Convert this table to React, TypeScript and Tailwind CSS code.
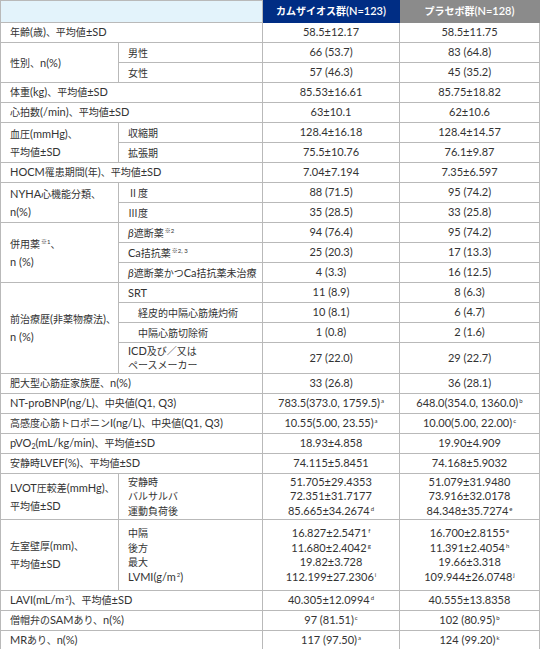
import React from 'react';

type Sub = { label: React.ReactNode; a: React.ReactNode; b: React.ReactNode; indent?: boolean; tall?: boolean };

const line = 'border border-[#b9b9b9]';
const thin = 'border-t-[#dcdcdc]';

// Japanese runs are set a size smaller than the Latin text, as in the source table
const CJK = /([\u2000-\u206f\u2150-\u218f\u3000-\u30ff\u3400-\u9fff\uff00-\uffef]+)/;

const T = ({ s }: { s: string }) => (
  <>
    {s.split(CJK).map((p, i) =>
      i % 2 ? (
        <span key={i} className="text-[10px]">
          {p}
        </span>
      ) : (
        p
      )
    )}
  </>
);

const tx = (n: React.ReactNode) => (typeof n === 'string' ? <T s={n} /> : n);

const Sup = ({ children }: { children: React.ReactNode }) => (
  <sup className="relative -top-[4px] ml-px text-[6px] leading-none">{children}</sup>
);

const Single = ({ label, a, b }: { label: React.ReactNode; a: React.ReactNode; b: React.ReactNode }) => (
  <tr className="h-[20px]">
    <td colSpan={2} className={`${line} pl-[9px]`}>{tx(label)}</td>
    <td className={`${line} text-center`}>{a}</td>
    <td className={`${line} text-center`}>{b}</td>
  </tr>
);

const Group = ({ label, rows }: { label: React.ReactNode; rows: Sub[] }) => (
  <>
    {rows.map((r, i) => (
      <tr key={i} className={r.tall ? 'h-[31px]' : 'h-[20px]'}>
        {i === 0 && (
          <td rowSpan={rows.length} className={`${line} pl-[9px] leading-[18px]`}>
            {tx(label)}
          </td>
        )}
        <td className={`${line} ${i > 0 ? thin : ''} ${r.indent ? 'pl-[19px]' : 'pl-[9px]'} leading-[13px]`}>{tx(r.label)}</td>
        <td className={`${line} ${i > 0 ? thin : ''} text-center`}>{r.a}</td>
        <td className={`${line} ${i > 0 ? thin : ''} text-center`}>{r.b}</td>
      </tr>
    ))}
  </>
);

const Multi = ({ label, subs, a, b, h }: { label: React.ReactNode; subs: React.ReactNode[]; a: React.ReactNode[]; b: React.ReactNode[]; h: string }) => (
  <tr className={h}>
    <td className={`${line} pl-[9px] leading-[17px]`}>{label}</td>
    <td className={`${line} pl-[9px] leading-[14.5px]`}>
      {subs.map((s, i) => (
        <div key={i}>{tx(s)}</div>
      ))}
    </td>
    <td className={`${line} text-center leading-[14.5px]`}>
      {a.map((s, i) => (
        <div key={i}>{s}</div>
      ))}
    </td>
    <td className={`${line} text-center leading-[14.5px]`}>
      {b.map((s, i) => (
        <div key={i}>{s}</div>
      ))}
    </td>
  </tr>
);

export default function App() {
  return (
    <div className="w-[540px] bg-white font-['Lato','Noto_Sans_CJK_JP',sans-serif] text-[11px] text-[#333]">
      <table className="w-[539px] table-fixed border-collapse">
        <colgroup>
          <col className="w-[118px]" />
          <col className="w-[144px]" />
          <col className="w-[137px]" />
          <col className="w-[140px]" />
        </colgroup>
        <tbody>
          <tr className="h-[22px]">
            <td colSpan={2} className={`${line} bg-[#e3f3fb]`}></td>
            <td className="border border-[#002d84] bg-[#002d84] text-center font-semibold text-white">
              <T s="カムザイオス群(N=123)" />
            </td>
            <td className="border border-[#8b8b8b] bg-[#8b8b8b] text-center font-semibold text-white">
              <T s="プラセボ群(N=128)" />
            </td>
          </tr>
          <Single label="年齢(歳)、平均値±SD" a="58.5±12.17" b="58.5±11.75" />
          <Group
            label="性別、n(%)"
            rows={[
              { label: '男性', a: '66 (53.7)', b: '83 (64.8)' },
              { label: '女性', a: '57 (46.3)', b: '45 (35.2)' },
            ]}
          />
          <Single label="体重(kg)、平均値±SD" a="85.53±16.61" b="85.75±18.82" />
          <Single label="心拍数(/min)、平均値±SD" a="63±10.1" b="62±10.6" />
          <Group
            label={<><T s="血圧(mmHg)、" /><br /><T s="平均値±SD" /></>}
            rows={[
              { label: '収縮期', a: '128.4±16.18', b: '128.4±14.57' },
              { label: '拡張期', a: '75.5±10.76', b: '76.1±9.87' },
            ]}
          />
          <Single label="HOCM罹患期間(年)、平均値±SD" a="7.04±7.194" b="7.35±6.597" />
          <Group
            label={<><T s="NYHA心機能分類、" /><br />n(%)</>}
            rows={[
              { label: 'Ⅱ度', a: '88 (71.5)', b: '95 (74.2)' },
              { label: 'Ⅲ度', a: '35 (28.5)', b: '33 (25.8)' },
            ]}
          />
          <Group
            label={<><T s="併用薬" /><Sup>※1</Sup><T s="、" /><br />n (%)</>}
            rows={[
              { label: <><i>β</i><T s="遮断薬" /><Sup>※2</Sup></>, a: '94 (76.4)', b: '95 (74.2)' },
              { label: <>Ca<T s="拮抗薬" /><Sup>※2, 3</Sup></>, a: '25 (20.3)', b: '17 (13.3)' },
              { label: <><i>β</i><T s="遮断薬かつCa拮抗薬未治療" /></>, a: '4 (3.3)', b: '16 (12.5)' },
            ]}
          />
          <Group
            label={<><T s="前治療歴(非薬物療法)、" /><br />n (%)</>}
            rows={[
              { label: 'SRT', a: '11 (8.9)', b: '8 (6.3)' },
              { label: '経皮的中隔心筋焼灼術', a: '10 (8.1)', b: '6 (4.7)', indent: true },
              { label: '中隔心筋切除術', a: '1 (0.8)', b: '2 (1.6)', indent: true },
              { label: <><T s="ICD及び／又は" /><br /><T s="ペースメーカー" /></>, a: '27 (22.0)', b: '29 (22.7)', tall: true },
            ]}
          />
          <Single label="肥大型心筋症家族歴、n(%)" a="33 (26.8)" b="36 (28.1)" />
          <Single label="NT-proBNP(ng/L)、中央値(Q1, Q3)" a={<>783.5(373.0, 1759.5)<Sup>a</Sup></>} b={<>648.0(354.0, 1360.0)<Sup>b</Sup></>} />
          <Single label="高感度心筋トロポニンI(ng/L)、中央値(Q1, Q3)" a={<>10.55(5.00, 23.55)<Sup>a</Sup></>} b={<>10.00(5.00, 22.00)<Sup>c</Sup></>} />
          <Single label={<>pVO<sub className="text-[7px]">2</sub><T s="(mL/kg/min)、平均値±SD" /></>} a="18.93±4.858" b="19.90±4.909" />
          <Single label="安静時LVEF(%)、平均値±SD" a="74.115±5.8451" b="74.168±5.9032" />
          <Multi
            h="h-[46px]"
            label={<><T s="LVOT圧較差(mmHg)、" /><br /><T s="平均値±SD" /></>}
            subs={['安静時', 'バルサルバ', '運動負荷後']}
            a={['51.705±29.4353', '72.351±31.7177', <>85.665±34.2674<Sup>d</Sup></>]}
            b={['51.079±31.9480', '73.916±32.0178', <>84.348±35.7274<Sup>e</Sup></>]}
          />
          <Multi
            h="h-[71px]"
            label={<><T s="左室壁厚(mm)、" /><br /><T s="平均値±SD" /></>}
            subs={['中隔', '後方', '最大', <>LVMI(g/m<Sup>2</Sup>)</>]}
            a={[<>16.827±2.5471<Sup>f</Sup></>, <>11.680±2.4042<Sup>g</Sup></>, '19.82±3.728', <>112.199±27.2306<Sup>i</Sup></>]}
            b={[<>16.700±2.8155<Sup>e</Sup></>, <>11.391±2.4054<Sup>h</Sup></>, '19.66±3.318', <>109.944±26.0748<Sup>j</Sup></>]}
          />
          <Single label={<>LAVI(mL/m<Sup>2</Sup>)<T s="、平均値±SD" /></>} a={<>40.305±12.0994<Sup>d</Sup></>} b="40.555±13.8358" />
          <Single label="僧帽弁のSAMあり、n(%)" a={<>97 (81.51)<Sup>c</Sup></>} b={<>102 (80.95)<Sup>b</Sup></>} />
          <Single label="MRあり、n(%)" a={<>117 (97.50)<Sup>a</Sup></>} b={<>124 (99.20)<Sup>k</Sup></>} />
        </tbody>
      </table>
    </div>
  );
}
